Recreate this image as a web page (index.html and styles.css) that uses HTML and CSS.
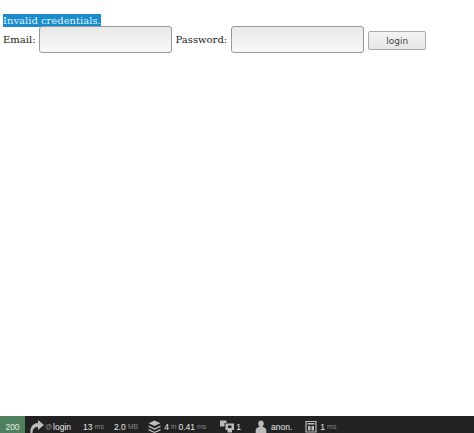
FILE: index.html
```html
<!DOCTYPE html>
<html lang="en">
<head>
<meta charset="utf-8">
<title>Login</title>
<link rel="stylesheet" href="styles.css">
</head>
<body>
<main class="page">
  <div class="flash"><span class="flash-text">Invalid credentials.</span></div>
  <form class="login">
    <label class="label" for="email">Email:</label>
    <input class="field" id="email" type="text">
    <label class="label label-wide" for="password">Password:</label>
    <input class="field" id="password" type="password">
    <button class="submit" type="button">login</button>
  </form>
</main>
<footer class="toolbar">
  <div class="status">200</div>
  <div class="item route">
    <svg class="icon" width="14" height="13" viewBox="0 0 14 13"><path d="M8 0 L14 5 L8 10 V7 C5 6.8 3 8 2.4 13 H0.4 C0 7 3 3.2 8 3 Z" fill="#bbb"/></svg>
    <span class="dim at">@</span><span class="val">login</span>
  </div>
  <div class="item time"><span class="val">13</span><span class="dim">ms</span></div>
  <div class="item mem"><span class="val">2.0</span><span class="dim">MB</span></div>
  <div class="item db">
    <svg class="icon" width="13" height="13" viewBox="0 0 13 13"><path d="M6.5 0.5 L12.5 3.2 L6.5 6 L0.5 3.2 Z M0.5 5.4 L6.5 8.2 L12.5 5.4 V7 L6.5 9.7 L0.5 7 Z M0.5 9 L6.5 11.7 L12.5 9 V10.4 L6.5 13 L0.5 10.4 Z" fill="#bbb"/></svg>
    <span class="val">4</span><span class="dim">in</span><span class="val">0.41</span><span class="dim">ms</span>
  </div>
  <div class="item forms">
    <svg class="icon" width="14" height="13" viewBox="0 0 14 13"><path d="M0 0.5 H6.5 V3 H4.5 V6.5 H0 Z" fill="#bbb"/><path fill-rule="evenodd" d="M5.5 3.5 H14 V10 H12 V12.5 H7.5 V10 H5.5 Z M8 5.5 V8 H11.5 V5.5 Z" fill="#bbb"/></svg>
    <span class="val">1</span>
  </div>
  <div class="item user">
    <svg class="icon" width="12" height="13" viewBox="0 0 12 13"><path d="M6 0.5 C7.8 0.5 8.8 2 8.8 3.6 C8.8 5 8 6.2 7.3 6.8 C9.5 7.4 11.3 8.6 11.3 10 V13 H0.7 V10 C0.7 8.6 2.5 7.4 4.7 6.8 C4 6.2 3.2 5 3.2 3.6 C3.2 2 4.2 0.5 6 0.5 Z" fill="#bbb"/></svg>
    <span class="val">anon.</span>
  </div>
  <div class="item ajax">
    <svg class="icon" width="12" height="13" viewBox="0 0 12 13"><path d="M1 1.5 H11 V12 H1 Z" fill="none" stroke="#bbb" stroke-width="1.2"/><path d="M2.5 3 H9.5 V4.5 H2.5 Z M3 6 H5.5 V10.5 H3 Z M6.5 6 H9 V10.5 H6.5 Z" fill="#bbb"/></svg>
    <span class="val">1</span><span class="dim">ms</span>
  </div>
</footer>
</body>
</html>
```
FILE: styles.css
```css
html, body {
  margin: 0;
  height: 100%;
}
body {
  display: flex;
  flex-direction: column;
  background: #fff;
  color: #222;
  font-family: "DejaVu Serif", serif;
  font-size: 10px;
  overflow: hidden;
}
.page {
  flex: 1;
  padding: 14px 3px 0;
}
.flash {
  height: 12px;
  line-height: 13px;
}
.flash-text {
  padding: 1px 0;
  background: #1a8ccc;
  color: #dff1fb;
}
.login {
  display: flex;
  align-items: center;
  height: 27px;
}
.label {
  margin-right: 3px;
}
.label-wide {
  margin-left: 1px;
  margin-right: 4px;
}
.field {
  box-sizing: border-box;
  width: 133px;
  height: 27px;
  margin: 0 3px 0 0;
  padding: 0;
  border: 1px solid #999;
  border-radius: 3px;
  background: linear-gradient(#e9e9e9, #f7f7f7);
}
.submit {
  box-sizing: border-box;
  align-self: flex-start;
  width: 58px;
  height: 19px;
  margin: 5px 0 0 1px;
  padding: 0;
  border: 1px solid #aaa;
  border-radius: 2px;
  background: linear-gradient(#f4f4f4, #e6e6e6);
  color: #444;
  font-family: "DejaVu Sans", sans-serif;
  font-size: 9px;
}
.toolbar {
  display: flex;
  box-sizing: border-box;
  height: 17px;
  background: #222;
  color: #e8e8e8;
  font-family: "Liberation Sans", sans-serif;
  font-size: 8.5px;
}
.status {
  display: flex;
  align-items: center;
  justify-content: center;
  box-sizing: border-box;
  width: 25px;
  padding-top: 5px;
  background: #4f805d;
}
.item {
  display: flex;
  align-items: center;
  box-sizing: border-box;
  padding-top: 4px;
  margin-left: 5px;
}
.icon {
  flex: none;
  margin-right: 3px;
}
.dim {
  margin-left: 2px;
  color: #888;
  font-size: 7px;
}
.at {
  margin: 0 -1px 0 -2px;
}
.dim + .val {
  margin-left: 2px;
}
.at + .val {
  margin-left: 2px;
}
.time { margin-left: 12px; }
.mem { margin-left: 10px; }
.db { margin-left: 10px; }
.forms { margin-left: 14px; }
.forms .icon { margin-right: 2px; }
.user { margin-left: 14px; }
.user .icon { margin-right: 4px; }
.ajax { margin-left: 13px; }
```
